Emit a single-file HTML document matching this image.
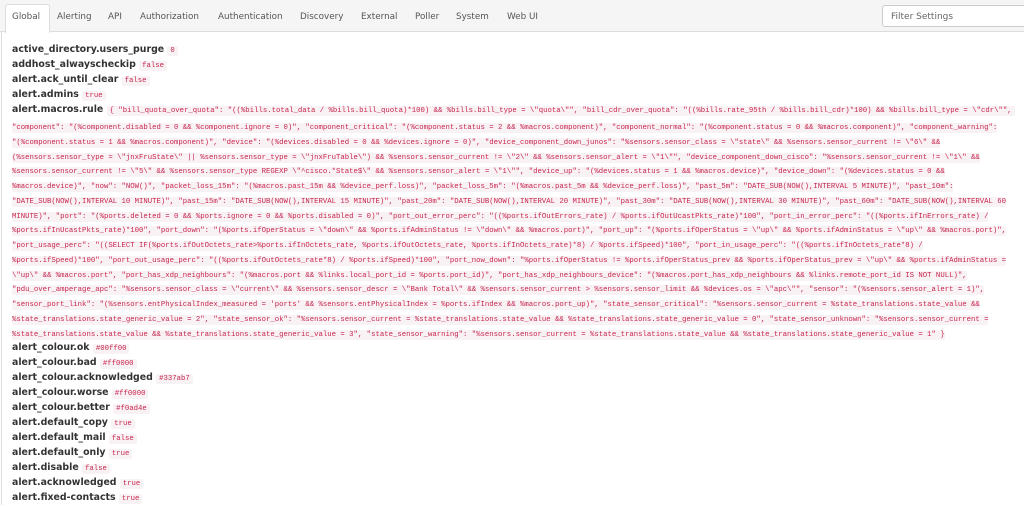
<!DOCTYPE html>
<html><head><meta charset="utf-8"><style>
body{margin:0;width:1024px;height:505px;overflow:hidden;background:#fff;font-family:"DejaVu Sans","Liberation Sans",sans-serif;}
.top{position:absolute;left:0;top:0;width:1024px;height:31px;background:#f5f5f5;border-bottom:1px solid #ddd;}
.tab{position:absolute;top:12px;font-size:8.8px;color:#555;}
.active{position:absolute;left:5px;top:4px;width:43px;height:28px;background:#fff;border:1px solid #ddd;border-bottom:none;border-radius:3px 3px 0 0;}
.search{position:absolute;left:882px;top:5px;width:150px;height:22px;border:1px solid #ccc;border-radius:3px;background:#fff;font-size:9px;color:#666;line-height:22px;padding-left:8px;box-sizing:border-box;}
.lb{position:absolute;left:1px;top:32px;width:1px;height:473px;background:#ddd;}
.rows{position:absolute;left:12px;top:42px;}
.r{height:15px;line-height:15px;white-space:nowrap;font-size:9.4px;font-weight:bold;color:#333;}
code{font-family:"Liberation Mono",monospace;font-weight:normal;font-size:7.3px;color:#c7254e;background:#f9f2f4;padding:1px 3px;border-radius:2px;}
.c{height:14.75px;line-height:14.75px;white-space:nowrap;}
.c code{padding:1px 0;}
.gap{height:2px;}
</style></head><body>
<div class="top"></div>
<div class="active"></div>
<div class="tab" style="left:12px;color:#555">Global</div>
<div class="tab" style="left:57px">Alerting</div>
<div class="tab" style="left:108px">API</div>
<div class="tab" style="left:140px">Authorization</div>
<div class="tab" style="left:218px">Authentication</div>
<div class="tab" style="left:300px">Discovery</div>
<div class="tab" style="left:361px">External</div>
<div class="tab" style="left:415px">Poller</div>
<div class="tab" style="left:456px">System</div>
<div class="tab" style="left:507px">Web UI</div>
<div class="search">Filter Settings</div>
<div class="lb"></div>
<div class="rows">
<div class="r">active_directory.users_purge <code>0</code></div>
<div class="r">addhost_alwayscheckip <code>false</code></div>
<div class="r">alert.ack_until_clear <code>false</code></div>
<div class="r">alert.admins <code>true</code></div>
<div class="r">alert.macros.rule <code>{ "bill_quota_over_quota": "((%bills.total_data / %bills.bill_quota)*100) &amp;&amp; %bills.bill_type = \"quota\"", "bill_cdr_over_quota": "((%bills.rate_95th / %bills.bill_cdr)*100) &amp;&amp; %bills.bill_type = \"cdr\"",</code></div>
<div class="c"><code>"component": "(%component.disabled = 0 &amp;&amp; %component.ignore = 0)", "component_critical": "(%component.status = 2 &amp;&amp; %macros.component)", "component_normal": "(%component.status = 0 &amp;&amp; %macros.component)", "component_warning":</code></div>
<div class="c"><code>"(%component.status = 1 &amp;&amp; %macros.component)", "device": "(%devices.disabled = 0 &amp;&amp; %devices.ignore = 0)", "device_component_down_junos": "%sensors.sensor_class = \"state\" &amp;&amp; %sensors.sensor_current != \"6\" &amp;&amp;</code></div>
<div class="c"><code>(%sensors.sensor_type = \"jnxFruState\" || %sensors.sensor_type = \"jnxFruTable\") &amp;&amp; %sensors.sensor_current != \"2\" &amp;&amp; %sensors.sensor_alert = \"1\"", "device_component_down_cisco": "%sensors.sensor_current != \"1\" &amp;&amp;</code></div>
<div class="c"><code>%sensors.sensor_current != \"5\" &amp;&amp; %sensors.sensor_type REGEXP \"^cisco.*State$\" &amp;&amp; %sensors.sensor_alert = \"1\"", "device_up": "(%devices.status = 1 &amp;&amp; %macros.device)", "device_down": "(%devices.status = 0 &amp;&amp;</code></div>
<div class="c"><code>%macros.device)", "now": "NOW()", "packet_loss_15m": "(%macros.past_15m &amp;&amp; %device_perf.loss)", "packet_loss_5m": "(%macros.past_5m &amp;&amp; %device_perf.loss)", "past_5m": "DATE_SUB(NOW(),INTERVAL 5 MINUTE)", "past_10m":</code></div>
<div class="c"><code>"DATE_SUB(NOW(),INTERVAL 10 MINUTE)", "past_15m": "DATE_SUB(NOW(),INTERVAL 15 MINUTE)", "past_20m": "DATE_SUB(NOW(),INTERVAL 20 MINUTE)", "past_30m": "DATE_SUB(NOW(),INTERVAL 30 MINUTE)", "past_60m": "DATE_SUB(NOW(),INTERVAL 60</code></div>
<div class="c"><code>MINUTE)", "port": "(%ports.deleted = 0 &amp;&amp; %ports.ignore = 0 &amp;&amp; %ports.disabled = 0)", "port_out_error_perc": "((%ports.ifOutErrors_rate) / %ports.ifOutUcastPkts_rate)*100", "port_in_error_perc": "((%ports.ifInErrors_rate) /</code></div>
<div class="c"><code>%ports.ifInUcastPkts_rate)*100", "port_down": "(%ports.ifOperStatus = \"down\" &amp;&amp; %ports.ifAdminStatus != \"down\" &amp;&amp; %macros.port)", "port_up": "(%ports.ifOperStatus = \"up\" &amp;&amp; %ports.ifAdminStatus = \"up\" &amp;&amp; %macros.port)",</code></div>
<div class="c"><code>"port_usage_perc": "((SELECT IF(%ports.ifOutOctets_rate&gt;%ports.ifInOctets_rate, %ports.ifOutOctets_rate, %ports.ifInOctets_rate)*8) / %ports.ifSpeed)*100", "port_in_usage_perc": "((%ports.ifInOctets_rate*8) /</code></div>
<div class="c"><code>%ports.ifSpeed)*100", "port_out_usage_perc": "((%ports.ifOutOctets_rate*8) / %ports.ifSpeed)*100", "port_now_down": "%ports.ifOperStatus != %ports.ifOperStatus_prev &amp;&amp; %ports.ifOperStatus_prev = \"up\" &amp;&amp; %ports.ifAdminStatus =</code></div>
<div class="c"><code>\"up\" &amp;&amp; %macros.port", "port_has_xdp_neighbours": "(%macros.port &amp;&amp; %links.local_port_id = %ports.port_id)", "port_has_xdp_neighbours_device": "(%macros.port_has_xdp_neighbours &amp;&amp; %links.remote_port_id IS NOT NULL)",</code></div>
<div class="c"><code>"pdu_over_amperage_apc": "%sensors.sensor_class = \"current\" &amp;&amp; %sensors.sensor_descr = \"Bank Total\" &amp;&amp; %sensors.sensor_current &gt; %sensors.sensor_limit &amp;&amp; %devices.os = \"apc\"", "sensor": "(%sensors.sensor_alert = 1)",</code></div>
<div class="c"><code>"sensor_port_link": "(%sensors.entPhysicalIndex_measured = 'ports' &amp;&amp; %sensors.entPhysicalIndex = %ports.ifIndex &amp;&amp; %macros.port_up)", "state_sensor_critical": "%sensors.sensor_current = %state_translations.state_value &amp;&amp;</code></div>
<div class="c"><code>%state_translations.state_generic_value = 2", "state_sensor_ok": "%sensors.sensor_current = %state_translations.state_value &amp;&amp; %state_translations.state_generic_value = 0", "state_sensor_unknown": "%sensors.sensor_current =</code></div>
<div class="c"><code>%state_translations.state_value &amp;&amp; %state_translations.state_generic_value = 3", "state_sensor_warning": "%sensors.sensor_current = %state_translations.state_value &amp;&amp; %state_translations.state_generic_value = 1" }</code></div>
<div class="gap"></div>
<div class="r">alert_colour.ok <code>#00ff00</code></div>
<div class="r">alert_colour.bad <code>#ff0000</code></div>
<div class="r">alert_colour.acknowledged <code>#337ab7</code></div>
<div class="r">alert_colour.worse <code>#ff0000</code></div>
<div class="r">alert_colour.better <code>#f0ad4e</code></div>
<div class="r">alert.default_copy <code>true</code></div>
<div class="r">alert.default_mail <code>false</code></div>
<div class="r">alert.default_only <code>true</code></div>
<div class="r">alert.disable <code>false</code></div>
<div class="r">alert.acknowledged <code>true</code></div>
<div class="r">alert.fixed-contacts <code>true</code></div>
</div>
</body></html>
